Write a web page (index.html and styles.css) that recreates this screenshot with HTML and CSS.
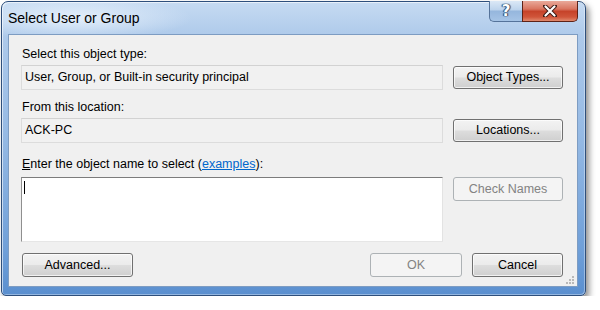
FILE: index.html
```html
<!DOCTYPE html>
<html>
<head>
<meta charset="utf-8">
<link rel="stylesheet" href="styles.css">
</head>
<body>
<div class="window">
  <div class="titlebar">
    <div class="title">Select User or Group</div>
    <div class="caption-buttons">
      <div class="cap-btn help"><span class="help-glyph">?</span></div>
      <div class="cap-btn close">
        <svg width="14" height="12" viewBox="0 0 14 12"><path d="M2 1 L12 11 M12 1 L2 11" stroke="#3b1a14" stroke-width="4" stroke-linecap="round"/><path d="M2.5 1.5 L11.5 10.5 M11.5 1.5 L2.5 10.5" stroke="#ffffff" stroke-width="2.2" stroke-linecap="round"/></svg>
      </div>
    </div>
  </div>
  <div class="client">
    <div class="form">
      <div class="label">Select this object type:</div>
      <div class="spacer"></div>
      <div class="field">User, Group, or Built-in security principal</div>
      <div class="btn">Object Types...</div>

      <div class="label label-gap">From this location:</div>
      <div class="spacer"></div>
      <div class="field">ACK-PC</div>
      <div class="btn">Locations...</div>

      <div class="label label-gap2"><u>E</u>nter the object name to select (<span class="link">examples</span>):</div>
      <div class="spacer"></div>
      <div class="textbox"><span class="caret"></span></div>
      <div class="btn disabled top">Check Names</div>

      <div class="footer">
        <div class="btn wide">Advanced...</div>
        <div class="footer-right">
          <div class="btn disabled ok">OK</div>
          <div class="btn cancel">Cancel</div>
        </div>
      </div>
    </div>
    <svg class="grip" width="10" height="10" viewBox="0 0 10 10">
      <g fill="#b9b9b9">
        <rect x="7" y="1" width="2" height="2"/>
        <rect x="4" y="4" width="2" height="2"/><rect x="7" y="4" width="2" height="2"/>
        <rect x="1" y="7" width="2" height="2"/><rect x="4" y="7" width="2" height="2"/><rect x="7" y="7" width="2" height="2"/>
      </g>
    </svg>
  </div>
</div>
</body>
</html>
```
FILE: styles.css
```css
html, body {
  margin: 0;
  padding: 0;
  background: #ffffff;
}
body {
  font-family: "Liberation Sans", Arial, sans-serif;
  font-size: 12.5px;
  color: #000;
}
.window {
  margin: 1px 0 0 1px;
  width: 585px;
  height: 295px;
  box-sizing: border-box;
  border: 1px solid #2e4f7c;
  border-radius: 7px 7px 5px 5px;
  padding: 0 7px 8px 6px;
  background:
    radial-gradient(ellipse 120px 22px at 70px 16px, rgba(235,244,253,0.85), rgba(235,244,253,0) 100%),
    linear-gradient(180deg, #c6dbf2 0%, #adc9ea 12%, #96bae4 45%, #6f9fd8 85%, #5a8fcf 100%);
  box-shadow: inset 1px 1px 0 rgba(255,255,255,0.6), inset -1px -1px 0 rgba(255,255,255,0.35), 3px 4px 6px rgba(0,0,0,0.45);
  display: flex;
  flex-direction: column;
}
.titlebar {
  height: 32px;
  display: flex;
  justify-content: space-between;
  align-items: flex-start;
}
.title {
  font-size: 14px;
  line-height: 16px;
  margin-top: 8px;
  color: #000;
}
.caption-buttons {
  display: flex;
  margin-top: -1px;
}
.cap-btn {
  height: 21px;
  box-sizing: border-box;
  display: flex;
  align-items: center;
  justify-content: center;
}
.help {
  width: 33px;
  border: 1px solid #55739a;
  border-top: none;
  border-right: none;
  border-radius: 0 0 0 5px;
  background: linear-gradient(180deg, #dbe8f6 0%, #bcd3ec 45%, #95b6dd 50%, #a6c4e6 100%);
}
.help-glyph {
  font-family: "DejaVu Sans", sans-serif;
  font-weight: bold;
  font-size: 15px;
  color: #ffffff;
  text-shadow: 0 0 1px #2c4566, 0 0 1px #2c4566, 1px 0 1px #2c4566, -1px 0 1px #2c4566;
  line-height: 15px;
}
.close {
  width: 56px;
  border: 1px solid #5e2216;
  border-top: none;
  border-radius: 0 0 5px 0;
  background: linear-gradient(180deg, #e9a99a 0%, #d97560 40%, #c6432a 52%, #d0553a 80%, #e08a6e 100%);
}
.client {
  position: relative;
  flex: 1;
  background: #f0f0f0;
  border: 1px solid #7d9cc2;
  box-sizing: border-box;
  padding: 12px 14px 0 12px;
}
.form {
  display: grid;
  grid-template-columns: 1fr 110px;
  column-gap: 10px;
  align-items: center;
}
.label {
  line-height: 15px;
  grid-column: 1;
  margin-bottom: 3px;
  padding-left: 1px;
}
.spacer {
  grid-column: 2;
}
.label-gap {
  margin-top: 10px;
}
.label-gap2 {
  margin-top: 14px;
  margin-bottom: 5px;
}
.link {
  color: #0066cc;
  text-decoration: underline;
}
.field {
  height: 25px;
  line-height: 23px;
  box-sizing: border-box;
  border: 1px solid #dcdcdc;
  border-top-color: #d2d2d2;
  background: #f1f1f1;
  padding-left: 3px;
  white-space: nowrap;
}
.textbox {
  height: 65px;
  box-sizing: border-box;
  background: #ffffff;
  border: 1px solid;
  border-color: #7c7c7c #e3e3e3 #e6e6e6 #8f8f8f;
  padding: 3px 0 0 2px;
}
.caret {
  display: block;
  width: 1px;
  height: 13px;
  background: #000;
}
.btn {
  height: 23px;
  box-sizing: border-box;
  border: 1px solid #707070;
  border-radius: 3px;
  background: linear-gradient(180deg, #f3f3f3 0%, #ebebeb 48%, #dddddd 52%, #cfcfcf 100%);
  box-shadow: inset 0 0 0 1px rgba(255,255,255,0.7);
  text-align: center;
  line-height: 21px;
  white-space: nowrap;
}
.btn.disabled {
  background: #f4f4f4;
  border-color: #adb2b5;
  color: #838383;
  box-shadow: none;
}
.btn.top {
  align-self: start;
  height: 24px;
  line-height: 22px;
}
.footer {
  grid-column: 1 / span 2;
  display: flex;
  justify-content: space-between;
  margin-top: 11px;
}
.footer .btn {
  height: 24px;
  line-height: 22px;
}
.wide {
  width: 111px;
  margin-left: 1px;
}
.footer-right {
  display: flex;
  gap: 10px;
}
.ok {
  width: 92px;
}
.cancel {
  width: 91px;
}
.grip {
  position: absolute;
  right: 2px;
  bottom: 1px;
}
```
